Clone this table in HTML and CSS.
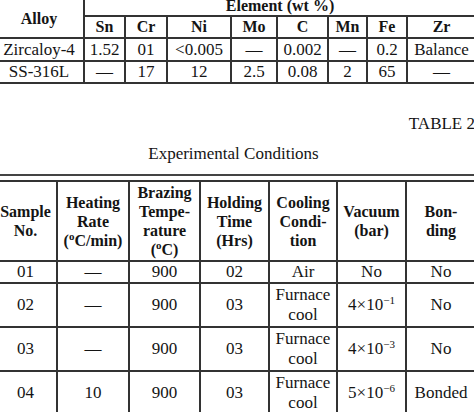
FILE: index.html
```html
<!DOCTYPE html>
<html>
<head>
<meta charset="utf-8">
<link rel="stylesheet" href="styles.css">
</head>
<body>
<div class="page">
  <table class="grid comp">
    <colgroup>
      <col style="width:89px"><col style="width:41px"><col style="width:42px"><col style="width:64px"><col style="width:46px"><col style="width:51px"><col style="width:39px"><col style="width:40px"><col style="width:68px">
    </colgroup>
    <tr class="r-el">
      <th rowspan="2" class="alloy">Alloy</th>
      <th colspan="8" class="element">Element (wt %)</th>
    </tr>
    <tr class="r-sub">
      <th>Sn</th><th>Cr</th><th>Ni</th><th>Mo</th><th>C</th><th>Mn</th><th>Fe</th><th>Zr</th>
    </tr>
    <tr class="r-d1">
      <td>Zircaloy-4</td><td>1.52</td><td>01</td><td>&lt;0.005</td><td>—</td><td>0.002</td><td>—</td><td>0.2</td><td>Balance</td>
    </tr>
    <tr class="r-d2">
      <td>SS-316L</td><td>—</td><td>17</td><td>12</td><td>2.5</td><td>0.08</td><td>2</td><td>65</td><td>—</td>
    </tr>
  </table>

  <div class="tablenum">TABLE 2</div>
  <div class="caption">Experimental Conditions</div>

  <div class="rule">
    <table class="grid cond">
      <colgroup>
        <col style="width:62px"><col style="width:72px"><col style="width:71px"><col style="width:69px"><col style="width:68px"><col style="width:69px"><col style="width:69px">
      </colgroup>
      <tr class="r-head">
        <th>Sample<br>No.</th>
        <th>Heating<br>Rate<br>(<sup>o</sup>C/min)</th>
        <th>Brazing<br>Tempe-<br>rature<br>(<sup>o</sup>C)</th>
        <th>Holding<br>Time<br>(Hrs)</th>
        <th>Cooling<br>Condi-<br>tion</th>
        <th>Vacuum<br>(bar)</th>
        <th>Bon-<br>ding</th>
      </tr>
      <tr class="r-one">
        <td>01</td><td>—</td><td>900</td><td>02</td><td>Air</td><td>No</td><td>No</td>
      </tr>
      <tr class="r-two">
        <td>02</td><td>—</td><td>900</td><td>03</td><td>Furnace<br>cool</td><td>4×10<sup>−1</sup></td><td>No</td>
      </tr>
      <tr class="r-two">
        <td>03</td><td>—</td><td>900</td><td>03</td><td>Furnace<br>cool</td><td>4×10<sup>−3</sup></td><td>No</td>
      </tr>
      <tr class="r-two">
        <td>04</td><td>10</td><td>900</td><td>03</td><td>Furnace<br>cool</td><td>5×10<sup>−6</sup></td><td>Bonded</td>
      </tr>
    </table>
  </div>
</div>
</body>
</html>
```

FILE: styles.css
```css
html, body {
  margin: 0;
  padding: 0;
  background: #ffffff;
}
body {
  width: 474px;
  height: 412px;
  overflow: hidden;
  font-family: "Liberation Serif", "Times New Roman", serif;
  color: #141414;
  font-size: 17px;
}
.page {
  width: 480px;
  margin-left: -5px;
  margin-top: -8px;
}
.grid {
  border-collapse: collapse;
  table-layout: fixed;
  width: 480px;
}
.grid th, .grid td {
  border: 2px solid #333333;
  padding: 0;
  text-align: center;
  vertical-align: middle;
  line-height: 20px;
  white-space: nowrap;
}
.grid tr > :first-child { border-left: none; }
.grid tr > :last-child { border-right: none; }
.grid tr:first-child > * { border-top: none; }
.grid th {
  font-weight: bold;
  font-size: 16px;
}
.grid td {
  font-size: 17px;
  font-weight: normal;
}
.r-el { height: 24px; }
.r-sub { height: 22px; }
.r-d1 { height: 23px; }
.r-d2 { height: 22px; }
.alloy {
  padding-top: 9px !important;
}
.element {
  vertical-align: top !important;
  line-height: 18px !important;
  padding-top: 5px !important;
}
.tablenum {
  margin-top: 30px;
  text-align: right;
  line-height: 20px;
  font-size: 17px;
}
.caption {
  margin-top: 10px;
  text-align: center;
  line-height: 20px;
  font-size: 17px;
  padding-right: 3px;
}
.rule {
  margin-top: 10px;
  border-top: 2px solid #444444;
  padding-top: 4px;
}
.cond {
  border-top: 2px solid #333333;
}
.cond th {
  line-height: 19px;
}
.r-head { height: 80px; }
.r-one { height: 22px; }
.r-two { height: 44px; }
sup {
  font-size: 11px;
  line-height: 0;
  vertical-align: 6px;
}
th sup {
  font-size: 11px;
  font-weight: bold;
}
```
